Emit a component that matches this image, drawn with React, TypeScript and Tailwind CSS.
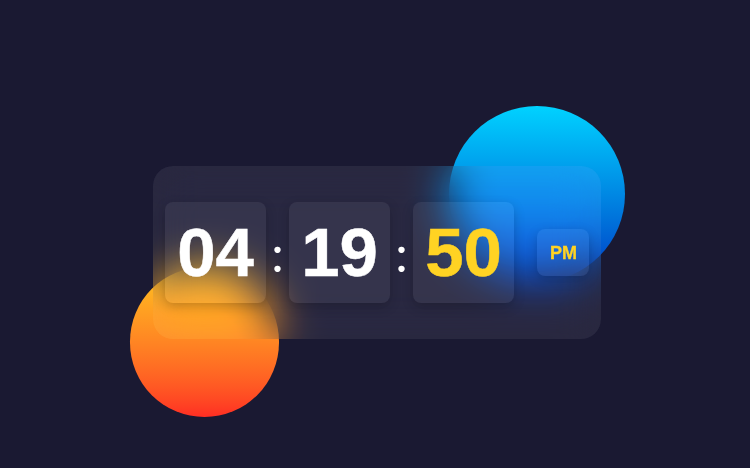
export default function App() {
  const box = 'flex w-[101px] h-[101px] items-center justify-center rounded-lg bg-white/[0.06] shadow-[0_4px_12px_rgba(0,0,0,0.2)] text-[69px] font-bold leading-none [-webkit-text-stroke:0.5px_currentColor]'
  const colon = "flex w-[23px] justify-center font-['Lato',sans-serif] text-[50px] font-normal leading-none text-white"

  return (
    <div className="relative h-[468px] w-[750px] overflow-hidden bg-[#1a1932] pl-[153px] pt-[166px] font-['Liberation_Sans',Arial,sans-serif]">
      <div className="absolute left-[449px] top-[106px] h-[176px] w-[176px] rounded-full bg-gradient-to-b from-[#00d2ff] to-[#0036c4]" />
      <div className="absolute left-[130px] top-[267px] h-[150px] w-[149px] rounded-full bg-gradient-to-b from-[#ffc31f] to-[#ff2d23]" />

      <div className="relative flex h-[173px] w-[448px] items-center rounded-[20px] bg-white/[0.065] px-3 backdrop-blur-[22px] backdrop-saturate-[1.1]">
        <div className={`${box} text-white`}>04</div>
        <div className={colon}>:</div>
        <div className={`${box} text-white`}>19</div>
        <div className={colon}>:</div>
        <div className={`${box} text-[#ffd323]`}>50</div>
        <div className="ml-[23px] flex h-[47px] w-[52px] items-center justify-center rounded-lg bg-white/[0.06] pl-px pt-px text-[18px] font-bold text-[#ffd323] shadow-[0_4px_12px_rgba(0,0,0,0.2)] [-webkit-text-stroke:0.3px_currentColor]">
          PM
        </div>
      </div>
    </div>
  )
}
